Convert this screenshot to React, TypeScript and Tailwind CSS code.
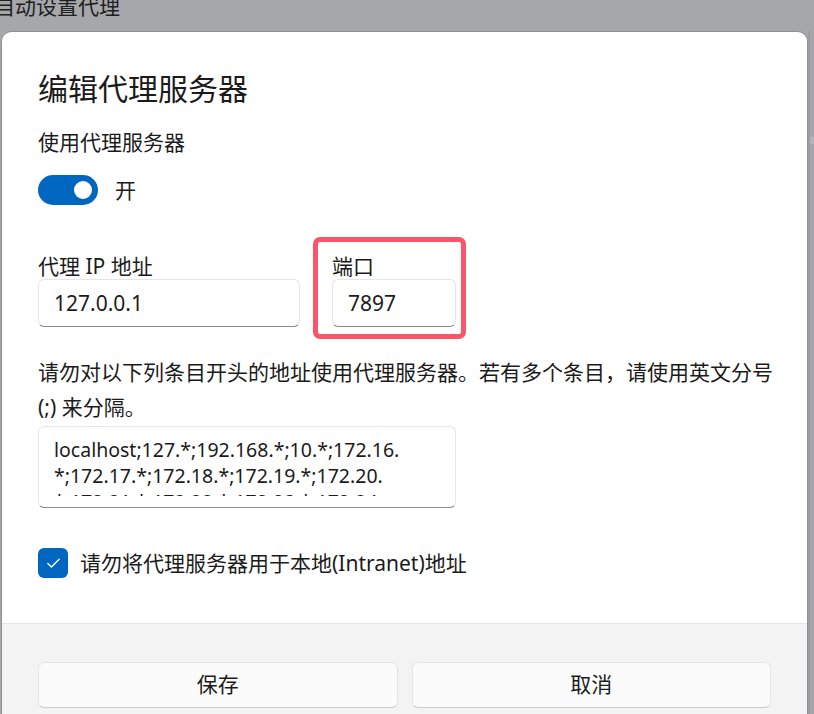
import { Check } from 'lucide-react';

function TextField({ value, width }: { value: string; width: string }) {
  return (
    <div
      className={`${width} h-[48px] flex items-center rounded-[6px] border border-[#e5e5e5] border-b-[#8a8a8a] bg-white pl-[15px] text-[21px] leading-[26px] text-[#1b1b1b]`}
    >
      {value}
    </div>
  );
}

export default function App() {
  return (
    <div className="w-[814px] h-[714px] overflow-hidden bg-[#a6a7ab] flex flex-col font-['Noto_Sans','Noto_Sans_CJK_SC',sans-serif] text-[#1b1b1b]">
      {/* settings page behind the dialog */}
      <div className="h-[31px] shrink-0">
        <p className="-mt-[8px] -ml-[6px] text-[21px] leading-[28px] text-[#202020] whitespace-nowrap">
          自动设置代理
        </p>
      </div>

      <div className="flex flex-1 min-h-0">
        <div className="w-[1px] shrink-0" />

        {/* dialog */}
        <div className="w-[807px] shrink-0 flex flex-col rounded-t-[10px] border border-b-0 border-[#8e8f92] bg-white overflow-hidden">
          <div className="flex-1 px-[36px] pt-[37px]">
            <h1 className="text-[30px] leading-[40px] font-normal">编辑代理服务器</h1>

            <p className="mt-[19px] text-[21px] leading-[28px]">使用代理服务器</p>

            <div className="mt-[19px] flex items-center gap-[17px]">
              <div className="w-[60px] h-[30px] rounded-full bg-[#0067c0] flex items-center justify-end pr-[6px]">
                <div className="w-[18px] h-[18px] rounded-full bg-white" />
              </div>
              <span className="text-[21px] leading-[28px]">开</span>
            </div>

            <div className="mt-[48px] flex gap-[32px]">
              <div>
                <p className="text-[21px] leading-[26px]">代理 IP 地址</p>
                <TextField value="127.0.0.1" width="w-[262px]" />
              </div>
              <div className="relative">
                <p className="text-[21px] leading-[26px]">端口</p>
                <TextField value="7897" width="w-[124px]" />
                {/* highlight annotation */}
                <div className="absolute -top-[16px] -left-[19px] -right-[10px] -bottom-[12px] rounded-[7px] border-[5px] border-[#fa5568]" />
              </div>
            </div>

            <p className="mt-[28px] text-[21px] leading-[35px] whitespace-nowrap">
              请勿对以下列条目开头的地址使用代理服务器。若有多个条目，请使用英文分号
              <br />
              (;) 来分隔。
            </p>

            <div className="mt-[1px] w-[418px] h-[82px] rounded-[6px] border border-[#e5e5e5] border-b-[#8a8a8a] bg-white">
              <div className="h-[69px] overflow-hidden pl-[15px] pt-[10px] text-[19.5px] leading-[26px] whitespace-nowrap">
                <div>localhost;127.*;192.168.*;10.*;172.16.</div>
                <div>*;172.17.*;172.18.*;172.19.*;172.20.</div>
                <div>*;172.21.*;172.22.*;172.23.*;172.24.</div>
              </div>
            </div>

            <div className="mt-[40px] flex items-center gap-[12px]">
              <div className="w-[30px] h-[30px] rounded-[6px] bg-[#0067c0] flex items-center justify-center">
                <Check size={17} strokeWidth={2} className="text-white" />
              </div>
              <span className="text-[21px] leading-[28px]">请勿将代理服务器用于本地(Intranet)地址</span>
            </div>
          </div>

          {/* footer */}
          <div className="h-[91px] shrink-0 border-t border-[#e5e5e5] bg-[#f3f3f3] px-[36px] pt-[38px]">
            <div className="grid grid-cols-2 gap-[14px]">
              <button className="h-[46px] rounded-[6px] border border-[#e5e5e5] border-b-[#cccccc] bg-[#fbfbfb] text-[21px] text-[#1b1b1b]">
                保存
              </button>
              <button className="h-[46px] rounded-[6px] border border-[#e5e5e5] border-b-[#cccccc] bg-[#fbfbfb] text-[21px] text-[#1b1b1b]">
                取消
              </button>
            </div>
          </div>
        </div>

        <div className="flex-1 border-l-2 border-[#9c9da0]">
          <div className="mt-[106px] h-[7px] bg-[#b4b5b8]" />
        </div>
      </div>
    </div>
  );
}
